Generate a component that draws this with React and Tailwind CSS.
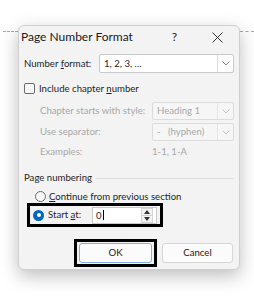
import React from 'react';

const font = { fontFamily: 'Lato, "Noto Sans", sans-serif' };

const Chevron = ({ className = '' }) => (
  <svg width="8" height="5" viewBox="0 0 8 5" className={className}>
    <path d="M0.5 0.5 L4 4 L7.5 0.5" fill="none" stroke="currentColor" strokeWidth="1" />
  </svg>
);

/**
 * Dropdown box, enabled or greyed out
 */
const Select = ({ value, width, disabled = false }) => (
  <div
    className={`flex h-full shrink-0 items-stretch rounded-[2px] border ${
      disabled ? 'border-[#dcdcdc] bg-[#f6f6f6] text-[#a8a8a8]' : 'border-[#c8c8c8] bg-white text-[#1f1f1f]'
    } ${width}`}
  >
    <span className="flex flex-1 items-center whitespace-pre pl-[4px]">{value}</span>
    <span
      className={`flex w-[16px] items-center justify-center border-l ${
        disabled ? 'border-[#e6e6e6] text-[#c4c4c4]' : 'border-[#dedede] text-[#808080]'
      }`}
    >
      <Chevron />
    </span>
  </div>
);

export default function App() {
  return (
    <div className="relative h-[300px] w-[254px] overflow-hidden whitespace-nowrap bg-white text-[9.6px] leading-none" style={font}>
      {/* page boundary of the document behind the dialog */}
      <div className="absolute left-[3px] top-[31px] w-[15px] border-t border-dashed border-[#9aaac4]" />
      <div className="absolute left-[240px] top-[31px] w-[14px] border-t border-dashed border-[#9aaac4]" />

      <div className="relative ml-[18px] mt-[25px] flex h-[245px] w-[222px] flex-col rounded-[6px] border border-[#cfcfcf] bg-[#f3f3f3] shadow-[0_6px_18px_rgba(0,0,0,0.26)]">
        {/* Title bar */}
        <div className="flex h-[22px] items-center pl-[2px] text-[#1a1a1a]">
          <span className="text-[12px]">Page Number Format</span>
          <span className="ml-auto mr-[35px] text-[12px]">?</span>
          <svg width="11" height="11" viewBox="0 0 11 11" className="mr-[16px]">
            <path d="M0.5 0.5 L10.5 10.5 M10.5 0.5 L0.5 10.5" stroke="#333" strokeWidth="1" />
          </svg>
        </div>

        <div className="flex flex-col px-[5px] text-[#1f1f1f]">
          {/* Number format */}
          <div className="mt-[6px] flex h-[19px] items-center">
            <span className="w-[75px]">
              Number <u>f</u>ormat:
            </span>
            <Select value="1, 2, 3, …" width="w-[135px]" />
          </div>

          {/* Include chapter number */}
          <div className="mt-[10px] flex h-[11px] items-center">
            <span className="h-[11px] w-[11px] rounded-[2px] border border-[#6b6b6b] bg-[#f8f8f8]" />
            <span className="ml-[4px]">
              Include chapter <u>n</u>umber
            </span>
          </div>

          <div className="mt-[8px] flex h-[18px] items-center pl-[16px] text-[#a8a8a8]">
            <span className="w-[112px]">Chapter starts with style:</span>
            <Select value="Heading 1" width="w-[82px]" disabled />
          </div>
          <div className="mt-[3px] flex h-[18px] items-center pl-[16px] text-[#a8a8a8]">
            <span className="w-[112px]">Use separator:</span>
            <Select value="-   (hyphen)" width="w-[82px]" disabled />
          </div>
          <div className="mt-[4px] flex h-[14px] items-center pl-[16px] text-[#a8a8a8]">
            <span className="w-[112px]">Examples:</span>
            <span>1-1, 1-A</span>
          </div>

          {/* Page numbering group */}
          <div className="mt-[12px] flex h-[14px] items-center">
            <span>Page numbering</span>
            <span className="ml-[4px] flex-1 border-t border-[#dcdcdc]" />
          </div>
          <div className="mt-[5px] flex h-[13px] items-center pl-[11px]">
            <span className="h-[11px] w-[11px] rounded-full border border-[#6b6b6b] bg-[#f8f8f8]" />
            <span className="ml-[3px]">
              <u>C</u>ontinue from previous section
            </span>
          </div>
          <div className="ml-[3px] flex h-[24px] w-[136px] items-center border-[3px] border-black pl-[3px]">
            <span className="flex h-[11px] w-[11px] items-center justify-center rounded-full bg-[#0067c0]">
              <span className="h-[4px] w-[4px] rounded-full bg-white" />
            </span>
            <span className="ml-[4px] w-[44px]">
              Start <u>a</u>t:
            </span>
            <div className="flex h-[17px] w-[65px] items-center border border-[#c8c8c8] bg-white pl-[3px]">
              <span className="flex-1">
                0<span className="ml-[1px] inline-block h-[10px] w-px translate-y-[1px] bg-black" />
              </span>
              <div className="mr-[3px] flex h-[15px] w-[12px] flex-col border border-[#d4d4d4] bg-[#f3f3f3]">
                <span className="flex flex-1 items-center justify-center border-b border-[#d4d4d4]">
                  <svg width="6" height="4" viewBox="0 0 6 4"><path d="M3 0 L6 4 L0 4 Z" fill="#333" /></svg>
                </span>
                <span className="flex flex-1 items-center justify-center">
                  <svg width="6" height="4" viewBox="0 0 6 4"><path d="M0 0 L6 0 L3 4 Z" fill="#333" /></svg>
                </span>
              </div>
            </div>
          </div>

          {/* Buttons */}
          <div className="mt-[12px] flex items-center">
            <div className="ml-[50px] flex h-[28px] w-[83px] items-center justify-center border-[3px] border-black">
              <button className="h-[20px] w-[73px] rounded-[3px] border border-[#7fb0df] bg-[#fbfbfb] text-[9.6px] text-[#1a1a1a]">
                OK
              </button>
            </div>
            <button className="ml-[5px] h-[20px] w-[71px] rounded-[3px] border border-[#d6d6d6] bg-[#fbfbfb] text-[9.6px] text-[#1a1a1a]">
              Cancel
            </button>
          </div>
        </div>
      </div>
    </div>
  );
}
